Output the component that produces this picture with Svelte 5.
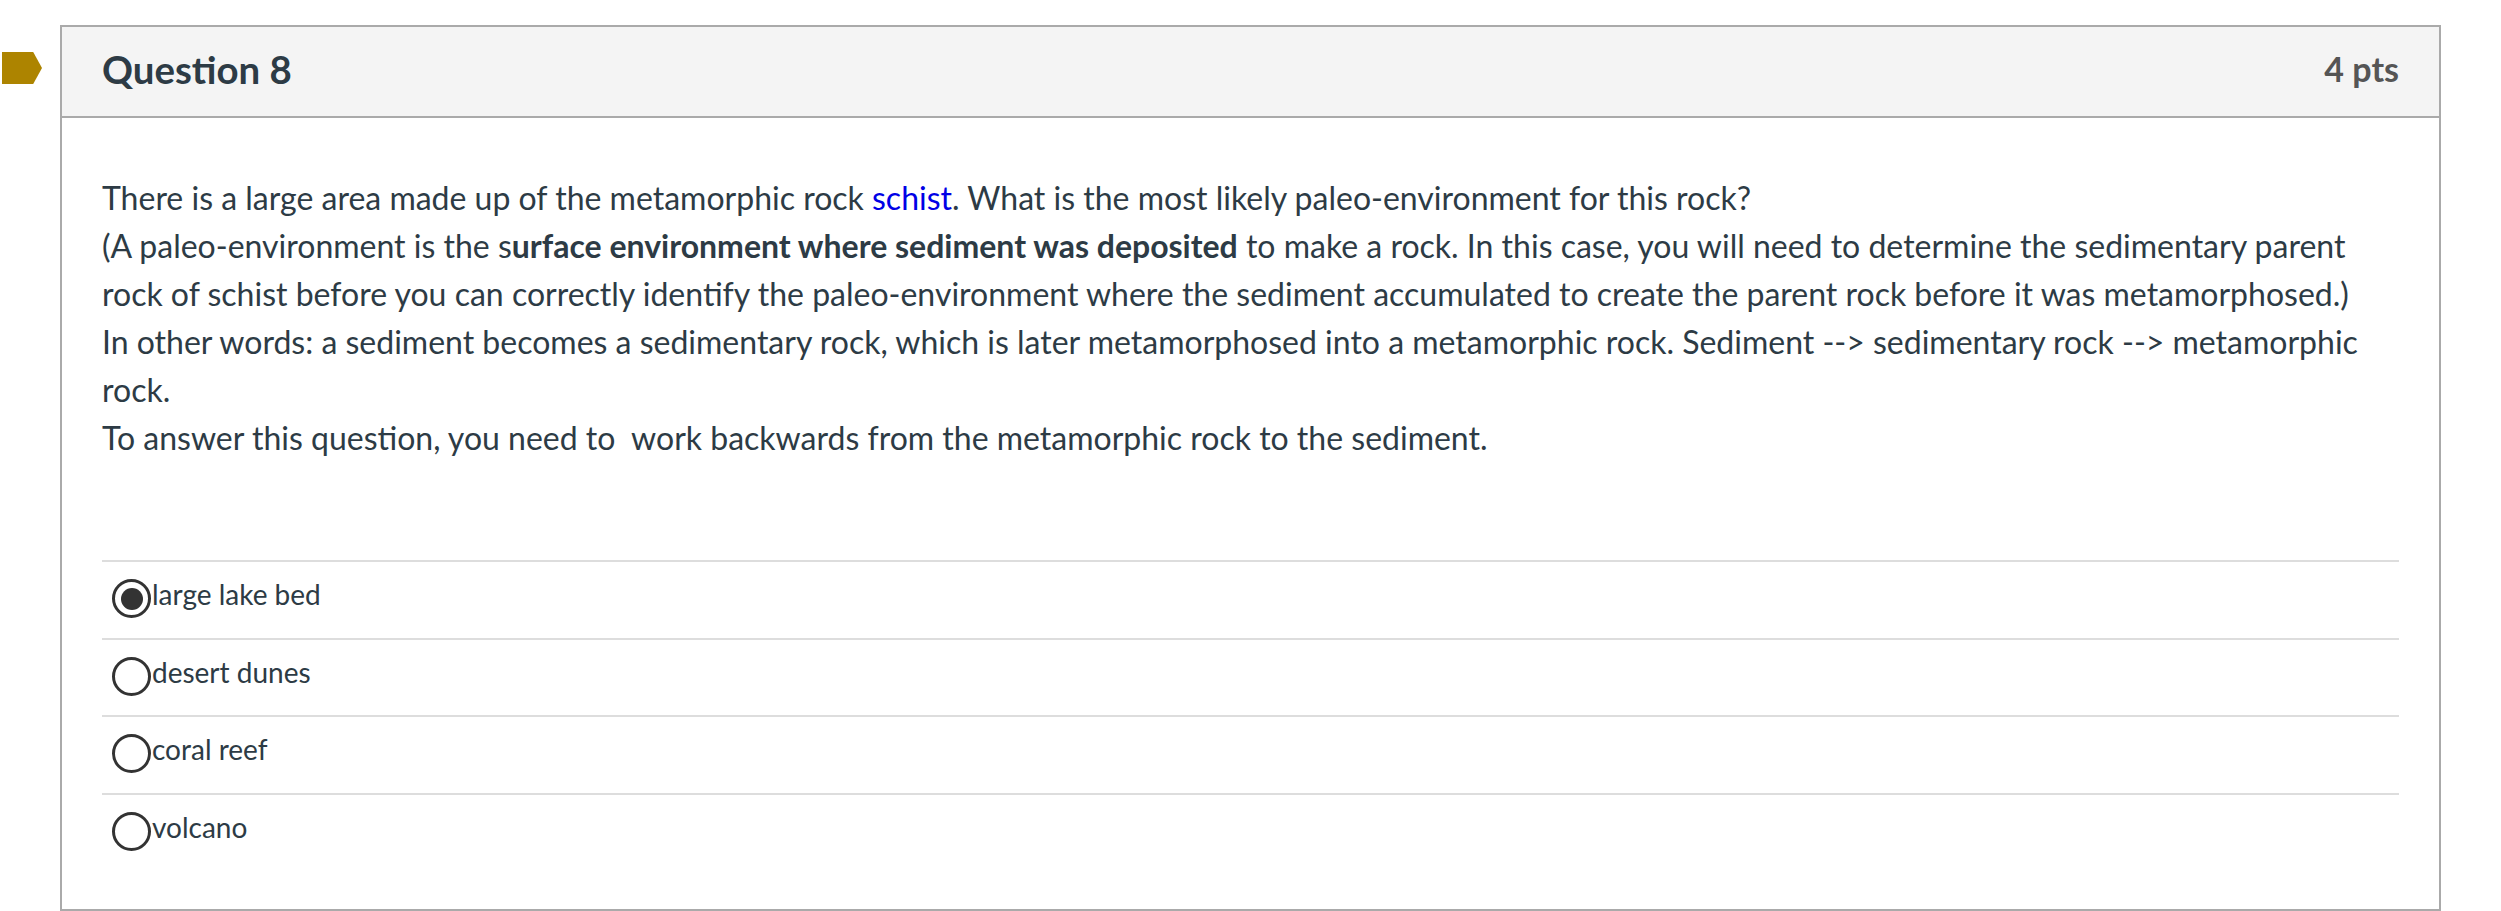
<script lang="ts">
  const answers = [
    { text: 'large lake bed', selected: true },
    { text: 'desert dunes', selected: false },
    { text: 'coral reef', selected: false },
    { text: 'volcano', selected: false }
  ]
</script>

<div class="page">
  <div class="flag"></div>
  <section class="question">
    <header class="q-header">
      <h2>Question 8</h2>
      <span class="pts">4 pts</span>
    </header>
    <div class="q-body">
      <div class="q-text">
        <div>There is a large area made up of the metamorphic rock <span class="link">schist</span>. What is the most likely paleo-environment for this rock?</div>
        <div>(A paleo-environment is the s<strong>urface environment where sediment was deposited</strong> to make a rock. In this case, you will need to determine the sedimentary parent rock of schist before you can correctly identify the paleo-environment where the sediment accumulated to create the parent rock before it was metamorphosed.)</div>
        <div>In other words: a sediment becomes a sedimentary rock, which is later metamorphosed into a metamorphic rock. Sediment --&gt; sedimentary rock --&gt; metamorphic rock.</div>
        <div>To answer this question, you need to&nbsp; work backwards from the metamorphic rock to the sediment.</div>
      </div>
      <ul class="answers">
        {#each answers as a}
          <li>
            <span class="radio" class:on={a.selected}></span>
            <span class="label">{a.text}</span>
          </li>
        {/each}
      </ul>
    </div>
  </section>
</div>

<style>
  :global(body) {
    margin: 0;
    background: #fff;
  }

  .page {
    position: relative;
    height: 911px;
    overflow: hidden;
    padding: 25px 60px 0 60px;
    box-sizing: border-box;
    font-family: Lato, "Liberation Sans", sans-serif;
    color: #2d3b45;
  }

  .flag {
    position: absolute;
    left: 2px;
    top: 52px;
    width: 40px;
    height: 32px;
    background: #ad8400;
    clip-path: polygon(0 0, 78% 0, 100% 50%, 78% 100%, 0 100%);
  }

  .question {
    border: 2px solid #aaa;
    height: 886px;
    box-sizing: border-box;
  }

  .q-header {
    display: flex;
    justify-content: space-between;
    align-items: center;
    height: 91px;
    box-sizing: border-box;
    padding: 0 40px 6px;
    background: #f4f4f4;
    border-bottom: 2px solid #aaa;
  }

  h2 {
    margin: 0;
    font-size: 38.4px;
    font-weight: 700;
  }

  .pts {
    font-size: 34px;
    font-weight: 700;
    color: #555;
  }

  .q-body {
    padding: 56px 40px 0;
  }

  .q-text {
    font-size: 32px;
    line-height: 48px;
  }

  .link {
    color: #0000e6;
  }

  .answers {
    list-style: none;
    margin: 98px 0 0;
    padding: 0;
  }

  .answers li {
    display: flex;
    align-items: flex-start;
    height: 77.6px;
    box-sizing: border-box;
    border-top: 2px solid #ddd;
    padding: 14px 0 0 10px;
    font-size: 28px;
    line-height: 36px;
  }

  .radio {
    width: 39px;
    height: 39px;
    box-sizing: border-box;
    border: 3px solid #333;
    border-radius: 50%;
    flex-shrink: 0;
    display: flex;
    align-items: center;
    justify-content: center;
    margin: 3px 1px 0 0;
  }

  .radio.on::after {
    content: "";
    width: 22px;
    height: 22px;
    border-radius: 50%;
    background: #333;
  }
</style>
